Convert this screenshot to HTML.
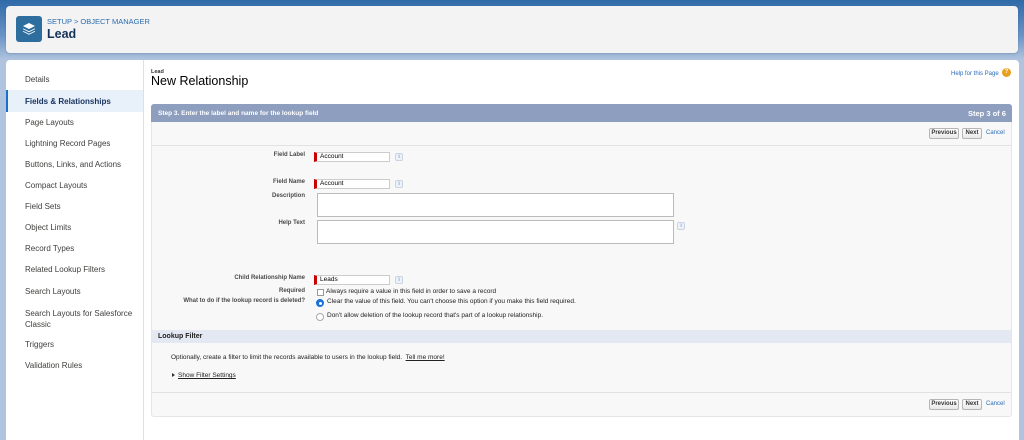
<!DOCTYPE html>
<html><head><style>
*{margin:0;padding:0;box-sizing:border-box}
body{width:1024px;height:431px;overflow:hidden;background:#b0c4df;font-family:"Liberation Sans",Arial,sans-serif;position:relative}
.a{position:absolute}
.top{left:0;top:0;width:1024px;height:60px;background:linear-gradient(#2f6aa8,#6b94c6 60%,#b0c4df)}
.hdr{left:6px;top:6px;width:1012px;height:47px;background:#f3f3f3;border-radius:4px;box-shadow:0 1px 2px rgba(0,0,0,.15)}
.icon{left:16px;top:16px;width:26px;height:26px;background:#2e6e9e;border-radius:3px}
.side{left:6px;top:60px;width:138px;height:380px;background:#fff;border-right:1px solid #e0e0e0;border-radius:4px 0 0 0}
.side div{position:absolute;left:19px;font-size:8px;color:#3e3e3c}
.main{left:144px;top:60px;width:875px;height:380px;background:#fff;border-radius:0 4px 0 0}
.lbl{font-size:6px;font-weight:bold;color:#4a4a4a;text-align:right;width:160px;left:145px}
.in{height:10px;background:#fff;border:1px solid #ccc;border-left:3px solid #c00;font-size:6.5px;padding-left:3px;line-height:8px;color:#000}
.info{width:8px;height:8px;border:1px solid #c9d4e3;background:#eef2f8;border-radius:2px;font-size:5px;color:#3a6fc2;text-align:center;line-height:6px}
.ta{background:#fff;border:1px solid #bbb;height:24px;width:357px;left:317px}
.btn{height:11px;border:1px solid #b5b5b5;background:linear-gradient(#fff,#e8e8e8);border-radius:2px;font-size:6px;font-weight:bold;color:#333;line-height:9px;text-align:center}
.t{font-size:6.5px;color:#222}
.rad{width:8px;height:8px;border-radius:50%;border:1px solid #aaa;background:#fff}
</style></head><body>
<div class="a top"></div>
<div class="a hdr"></div>
<div class="a icon"><svg width="26" height="26" viewBox="0 0 26 26"><g fill="#fff"><path d="M13 7l6 3-6 3-6-3z"/><path d="M7.5 12.5l5.5 2.8 5.5-2.8 .8.5-6.3 3.2-6.3-3.2z"/><path d="M7.5 15l5.5 2.8 5.5-2.8 .8.5-6.3 3.2-6.3-3.2z"/></g></svg></div>
<div class="a" style="left:47px;top:17px;font-size:7.5px;color:#2b6cb0">SETUP &gt; OBJECT MANAGER</div>
<div class="a" style="left:47px;top:27px;font-size:12.5px;font-weight:bold;color:#16325c">Lead</div>

<div class="a side">
<div style="top:15px">Details</div>
<div style="top:30px;left:0;width:137px;height:22px;background:#e8f0fa;border-left:2px solid #1b6fc7"></div>
<div style="top:37px;font-weight:bold;color:#16325c">Fields &amp; Relationships</div>
<div style="top:58px">Page Layouts</div>
<div style="top:79px">Lightning Record Pages</div>
<div style="top:100px">Buttons, Links, and Actions</div>
<div style="top:121px">Compact Layouts</div>
<div style="top:142px">Field Sets</div>
<div style="top:163px">Object Limits</div>
<div style="top:184px">Record Types</div>
<div style="top:205px">Related Lookup Filters</div>
<div style="top:227px">Search Layouts</div>
<div style="top:248px;line-height:11px">Search Layouts for Salesforce<br>Classic</div>
<div style="top:280px">Triggers</div>
<div style="top:301px">Validation Rules</div>
</div>

<div class="a main"></div>
<div class="a" style="left:151px;top:69px;font-size:5.5px;font-weight:bold;color:#333">Lead</div>
<div class="a" style="left:151px;top:74px;font-size:12.5px;color:#000">New Relationship</div>
<div class="a" style="left:951px;top:71px;font-size:6px;color:#2a6bb8">Help for this Page</div>
<div class="a" style="left:1002px;top:68px;width:9px;height:9px;border-radius:50%;background:#e8a021;color:#fff;font-size:6px;text-align:center;line-height:9px;font-weight:bold">?</div>

<div class="a" style="left:151px;top:104px;width:861px;height:313px;background:#f8f8f8;border:1px solid #e6e6e6;border-radius:3px"></div>
<div class="a" style="left:151px;top:104px;width:861px;height:18px;background:#8d9ebf;border-radius:3px 3px 0 0"></div>
<div class="a" style="left:158px;top:110px;font-size:6.5px;font-weight:bold;color:#fff">Step 3. Enter the label and name for the lookup field</div>
<div class="a" style="left:968px;top:109px;font-size:7.5px;font-weight:bold;color:#fff">Step 3 of 6</div>
<div class="a" style="left:152px;top:145px;width:859px;height:1px;background:#e2e2e2"></div>

<div class="a btn" style="left:929px;top:128px;width:30px">Previous</div>
<div class="a btn" style="left:962px;top:128px;width:20px">Next</div>
<div class="a" style="left:986px;top:130px;font-size:6px;color:#2a6bb8">Cancel</div>

<div class="a lbl" style="top:152px">Field Label</div>
<div class="a in" style="left:314px;top:152px;width:76px">Account</div>
<div class="a info" style="left:395px;top:153px">i</div>
<div class="a lbl" style="top:179px">Field Name</div>
<div class="a in" style="left:314px;top:179px;width:76px">Account</div>
<div class="a info" style="left:395px;top:180px">i</div>
<div class="a lbl" style="top:193px">Description</div>
<div class="a ta" style="top:193px"></div>
<div class="a lbl" style="top:220px">Help Text</div>
<div class="a ta" style="top:220px"></div>
<div class="a info" style="left:677px;top:222px">i</div>

<div class="a lbl" style="top:275px">Child Relationship Name</div>
<div class="a in" style="left:314px;top:275px;width:76px">Leads</div>
<div class="a info" style="left:395px;top:276px">i</div>
<div class="a lbl" style="top:288px">Required</div>
<div class="a" style="left:317px;top:289px;width:7px;height:7px;border:1px solid #999;background:#fff"></div>
<div class="a t" style="left:326px;top:288px">Always require a value in this field in order to save a record</div>
<div class="a lbl" style="top:298px;width:200px;left:105px">What to do if the lookup record is deleted?</div>
<div class="a rad" style="left:316px;top:299px;background:#1b72d8;border-color:#1b72d8"><div style="width:3px;height:3px;border-radius:50%;background:#fff;margin:1.5px"></div></div>
<div class="a t" style="left:327px;top:298px">Clear the value of this field. You can't choose this option if you make this field required.</div>
<div class="a rad" style="left:316px;top:313px"></div>
<div class="a t" style="left:327px;top:312px">Don't allow deletion of the lookup record that's part of a lookup relationship.</div>

<div class="a" style="left:152px;top:330px;width:859px;height:13px;background:#e4e8f2"></div>
<div class="a" style="left:158px;top:333px;font-size:7px;font-weight:bold;color:#222">Lookup Filter</div>
<div class="a t" style="left:171px;top:354px">Optionally, create a filter to limit the records available to users in the lookup field.&nbsp; <u>Tell me more!</u></div>
<div class="a" style="left:172px;top:373px;width:0;height:0;border-left:3px solid #333;border-top:2.5px solid transparent;border-bottom:2.5px solid transparent"></div>
<div class="a t" style="left:178px;top:372px"><u>Show Filter Settings</u></div>
<div class="a" style="left:152px;top:392px;width:859px;height:1px;background:#e2e2e2"></div>

<div class="a btn" style="left:929px;top:399px;width:30px">Previous</div>
<div class="a btn" style="left:962px;top:399px;width:20px">Next</div>
<div class="a" style="left:986px;top:401px;font-size:6px;color:#2a6bb8">Cancel</div>
</body></html>
